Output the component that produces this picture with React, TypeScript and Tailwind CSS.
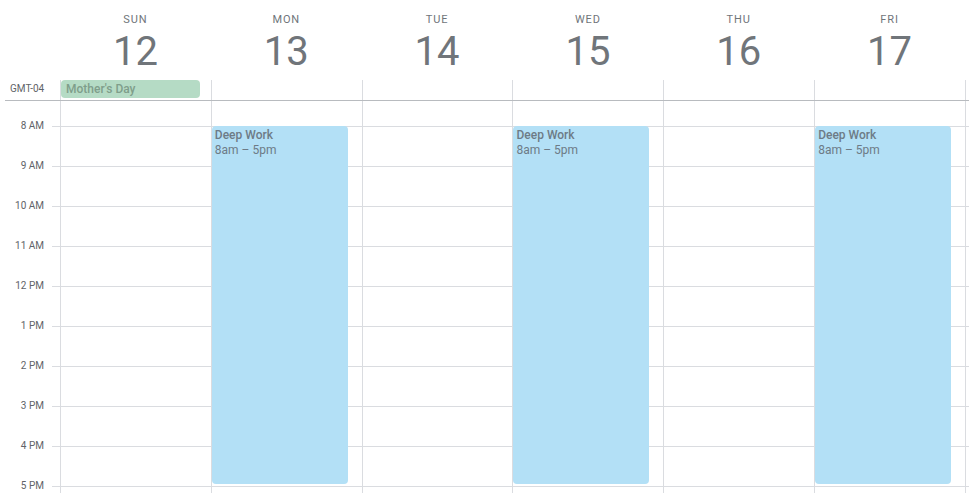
import React from "react";

const days = [
  { name: "SUN", date: 12, work: false, allDay: "Mother's Day" },
  { name: "MON", date: 13, work: true },
  { name: "TUE", date: 14, work: false },
  { name: "WED", date: 15, work: true },
  { name: "THU", date: 16, work: false },
  { name: "FRI", date: 17, work: true },
];

const hours = ["8 AM", "9 AM", "10 AM", "11 AM", "12 PM", "1 PM", "2 PM", "3 PM", "4 PM", "5 PM"];

function HourCells() {
  return (
    <>
      <div className="h-[25px]" />
      {hours.map((h) => (
        <div key={h} className="h-[40px] shrink-0 border-t border-[#dadce0]" />
      ))}
    </>
  );
}

export default function App() {
  return (
    <div className="w-[969px] h-[493px] overflow-hidden bg-white font-['Roboto',sans-serif] text-[#70757a] flex flex-col">
      {/* day headers */}
      <div className="grid grid-cols-[60px_repeat(6,1fr)_4px] h-[80px] shrink-0">
        <div />
        {days.map((d) => (
          <div key={d.name} className="flex flex-col items-center pt-[12px]">
            <span className="text-[11px] leading-[15px] font-normal tracking-[0.9px]">
              {d.name}
            </span>
            <span className="mt-[2px] text-[40px] leading-[46px] font-normal text-[#70757a]">
              {d.date}
            </span>
          </div>
        ))}
        <div />
      </div>

      {/* all-day row */}
      <div className="ml-[5px] grid grid-cols-[55px_repeat(6,1fr)_4px] h-[21px] shrink-0 border-b border-[#b8bbbf]">
        <div className="text-[10px] leading-[18px] pl-[5px] text-[#5f6368]">GMT-04</div>
        {days.map((d) => (
          <div key={d.name} className="border-l border-[#dadce0] pr-[11px]">
            {d.allDay && (
              <div className="h-[18px] rounded-[4px] bg-[#b5dbc5] text-[#7f9e8b] text-[12px] font-medium leading-[18px] px-[5px]">
                {d.allDay}
              </div>
            )}
          </div>
        ))}
        <div className="border-l border-[#dadce0]" />
      </div>

      {/* time grid */}
      <div className="flex-1 overflow-hidden grid grid-cols-[60px_repeat(6,1fr)_4px]">
        <div className="flex">
          <div className="w-[52px] flex flex-col items-end pr-[8px]">
            <div className="h-[19px] shrink-0" />
            {hours.map((h) => (
              <div key={h} className="h-[40px] shrink-0 text-[10px] leading-[12px] text-[#5f6368]">
                {h}
              </div>
            ))}
          </div>
          <div className="w-[8px] flex flex-col">
            <HourCells />
          </div>
        </div>
        {days.map((d) => (
          <div key={d.name} className="relative flex flex-col border-l border-[#dadce0]">
            <HourCells />
            {d.work && (
              <div className="absolute top-[25px] left-0 right-[14px] h-[358px] rounded-[4px] bg-[#b3e0f6] px-[3px] pt-[2px] text-[#6d7b86]">
                <div className="text-[12px] leading-[15px] font-medium">Deep Work</div>
                <div className="text-[12px] leading-[15px]">8am – 5pm</div>
              </div>
            )}
          </div>
        ))}
        <div className="flex flex-col border-l border-[#dadce0]">
          <HourCells />
        </div>
      </div>
    </div>
  );
}
